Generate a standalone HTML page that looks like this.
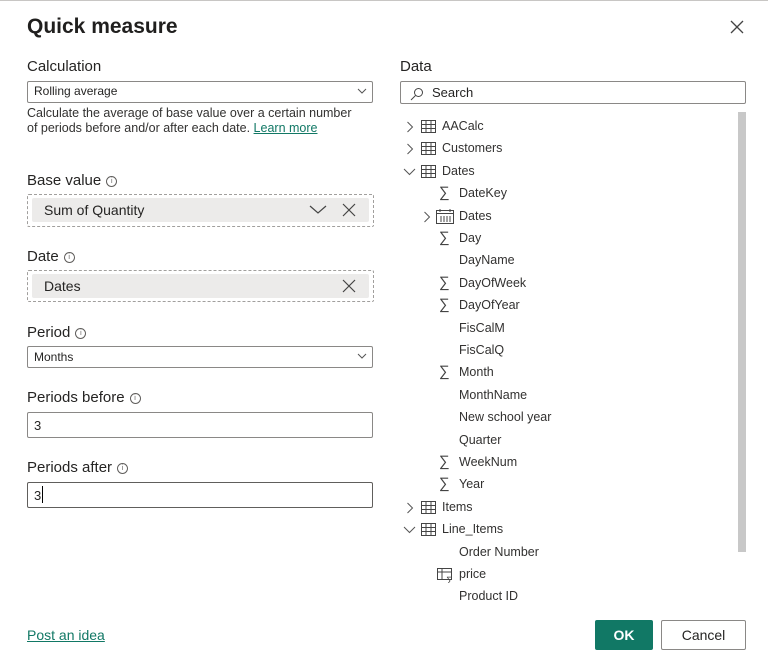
<!DOCTYPE html>
<html><head><meta charset="utf-8"><style>
*{margin:0;padding:0;box-sizing:border-box}
body{width:768px;height:662px;background:#fff;position:relative;overflow:hidden;font-family:"Liberation Sans",sans-serif;color:#252423}
.a{position:absolute;white-space:nowrap}
.lbl{font-size:15px;color:#252423}
.box{position:absolute;border:1px solid #8a8886;border-radius:2px;background:#fff}
.dot{position:absolute;border:1px dashed #a19f9d;border-radius:2px}
.chip{position:absolute;background:#ecebea;border-radius:2px}
.info{display:inline-block;width:11px;height:11px;border:1px solid #605e5c;border-radius:50%;font-size:7px;text-align:center;line-height:9px;vertical-align:2px;margin-left:5px;color:#605e5c}
.t{position:absolute;font-size:12.5px;color:#323130}
svg{position:absolute}
</style></head><body>
<div class="a" style="left:0;top:0;width:768px;height:1px;background:#c8c6c4"></div>
<div class="a" style="left:27px;top:15px;font-size:21px;font-weight:bold;color:#201f1e">Quick measure</div>
<svg style="left:730px;top:20px" width="14" height="14"><path d="M1 1L13 13M13 1L1 13" stroke="#444" stroke-width="1.3"/></svg>

<div class="a lbl" style="left:27px;top:58px">Calculation</div>
<div class="box" style="left:27px;top:81px;width:346px;height:22px"></div>
<div class="a" style="left:34px;top:84px;font-size:12px">Rolling average</div>
<svg style="left:357px;top:88px" width="10" height="7"><path d="M1 1L5 5L9 1" stroke="#555" fill="none"/></svg>
<div class="a" style="left:27px;top:106px;font-size:12.5px;line-height:14.5px;color:#323130">Calculate the average of base value over a certain number<br>of periods before and/or after each date. <span style="color:#117865;text-decoration:underline">Learn more</span></div>

<div class="a lbl" style="left:27px;top:172px">Base value<span class="info">i</span></div>
<div class="dot" style="left:27px;top:194px;width:347px;height:33px"></div>
<div class="chip" style="left:32px;top:198px;width:337px;height:24px"></div>
<div class="a" style="left:44px;top:202px;font-size:14px">Sum of Quantity</div>
<svg style="left:309px;top:205px" width="18" height="10"><path d="M1 1L9 8L17 1" stroke="#444" fill="none" stroke-width="1.2"/></svg>
<svg style="left:342px;top:203px" width="14" height="14"><path d="M1 1L13 13M13 1L1 13" stroke="#444" stroke-width="1.2"/></svg>

<div class="a lbl" style="left:27px;top:248px">Date<span class="info">i</span></div>
<div class="dot" style="left:27px;top:270px;width:347px;height:32px"></div>
<div class="chip" style="left:32px;top:274px;width:337px;height:24px"></div>
<div class="a" style="left:44px;top:278px;font-size:14px">Dates</div>
<svg style="left:342px;top:279px" width="14" height="14"><path d="M1 1L13 13M13 1L1 13" stroke="#444" stroke-width="1.2"/></svg>

<div class="a lbl" style="left:27px;top:324px">Period<span class="info">i</span></div>
<div class="box" style="left:27px;top:346px;width:346px;height:22px"></div>
<div class="a" style="left:34px;top:350px;font-size:12px">Months</div>
<svg style="left:357px;top:353px" width="10" height="7"><path d="M1 1L5 5L9 1" stroke="#555" fill="none"/></svg>

<div class="a lbl" style="left:27px;top:389px">Periods before<span class="info">i</span></div>
<div class="box" style="left:27px;top:412px;width:346px;height:26px"></div>
<div class="a" style="left:34px;top:418px;font-size:13px">3</div>

<div class="a lbl" style="left:27px;top:459px">Periods after<span class="info">i</span></div>
<div class="box" style="left:27px;top:482px;width:346px;height:26px;border-color:#605e5c"></div>
<div class="a" style="left:34px;top:488px;font-size:13px">3</div>
<div class="a" style="left:42px;top:486px;width:1px;height:17px;background:#000"></div>

<div class="a" style="left:27px;top:627px;font-size:14px;color:#117865;text-decoration:underline">Post an idea</div>

<div class="a lbl" style="left:400px;top:58px">Data</div>
<div class="box" style="left:400px;top:81px;width:346px;height:23px"></div>
<svg style="left:410px;top:87px" width="14" height="14"><circle cx="8.5" cy="5.5" r="4" stroke="#444" fill="none"/><path d="M5.5 8.5L1 13" stroke="#444"/></svg>
<div class="a" style="left:432px;top:85px;font-size:13px">Search</div>
<div class="a" style="left:738px;top:112px;width:8px;height:440px;background:#c8c8c8"></div>

<div id="tree"></div>
<script>
const rows=[["t","AACalc",0],["t","Customers",0],["te","Dates",0],["s","DateKey"],["c","Dates"],["s","Day"],["n","DayName"],["s","DayOfWeek"],["s","DayOfYear"],["n","FisCalM"],["n","FisCalQ"],["s","Month"],["n","MonthName"],["n","New school year"],["n","Quarter"],["s","WeekNum"],["s","Year"],["t","Items"],["te","Line_Items"],["n","Order Number"],["p","price"],["n","Product ID"]];
let h="";
const tbl=(x,y)=>`<svg style="left:${x}px;top:${y}px" width="15" height="13"><rect x="0.5" y="0.5" width="14" height="12" fill="none" stroke="#444"/><path d="M0 4.5H15M0 8.5H15M5 0V13M10 0V13" stroke="#444"/></svg>`;
rows.forEach((r,i)=>{const y=Math.round(119+i*22.4);const k=r[0];
if(k=="t"||k=="te"){
 h+= k=="t"?`<svg style="left:406px;top:${y+2}px" width="8" height="12"><path d="M1.5 1L6.5 6L1.5 11" stroke="#555" fill="none"/></svg>`:`<svg style="left:403px;top:${y+4}px" width="13" height="8"><path d="M1 1L6.5 6.5L12 1" stroke="#555" fill="none"/></svg>`;
 h+=tbl(421,y+1);h+=`<div class="t" style="left:442px;top:${y}px">${r[1]}</div>`;
}else{
 if(k=="s")h+=`<div class="t" style="left:439px;top:${y-2}px;font-size:15px;color:#444">∑</div>`;
 if(k=="c")h+=`<svg style="left:423px;top:${y+2}px" width="8" height="12"><path d="M1.5 1L6.5 6L1.5 11" stroke="#555" fill="none"/></svg><svg style="left:436px;top:${y}px" width="18" height="15"><rect x="0.5" y="1.5" width="17" height="13" fill="none" stroke="#444"/><path d="M0 4.5H18M4 0V3M14 0V3M5 7V13M8 7V13M11 7V13M14 7V13" stroke="#444"/></svg>`;
 if(k=="p")h+=`<svg style="left:437px;top:${y+1}px" width="17" height="15"><rect x="0.5" y="0.5" width="14" height="11" fill="none" stroke="#444"/><path d="M0 4H15M5 0V12" stroke="#444"/><text x="9" y="15" font-size="9" fill="#444">∑</text></svg>`;
 h+=`<div class="t" style="left:459px;top:${y}px">${r[1]}</div>`;
}});
document.getElementById("tree").innerHTML=h;
</script>

<div class="a" style="left:595px;top:620px;width:58px;height:30px;background:#117865;border-radius:2px;color:#fff;font-weight:bold;font-size:14px;text-align:center;line-height:30px">OK</div>
<div class="a" style="left:661px;top:620px;width:85px;height:30px;border:1px solid #8a8886;border-radius:2px;font-size:14px;text-align:center;line-height:28px;color:#252423">Cancel</div>
</body></html>
